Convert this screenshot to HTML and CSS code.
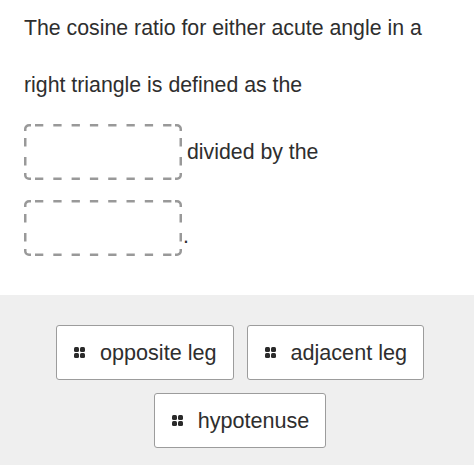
FILE: index.html
```html
<!DOCTYPE html>
<html>
<head>
<meta charset="utf-8">
<link rel="stylesheet" href="styles.css">
</head>
<body>
<div class="question">
  <p class="prompt">The cosine ratio for either acute angle in a<br>right triangle is defined as the</p>
  <div class="blank-row">
    <span class="blank"><svg width="158" height="56" viewBox="0 0 158 56" fill="none" stroke="#999999" stroke-width="2.5">
      <path d="M1.25 7V5A3.75 3.75 0 0 1 5 1.25H7M151 1.25H153A3.75 3.75 0 0 1 156.75 5V7M156.75 49V51A3.75 3.75 0 0 1 153 54.75H151M7 54.75H5A3.75 3.75 0 0 1 1.25 51V49"/>
      <path d="M11 1.25H147.5" stroke-dasharray="8.3 10"/>
      <path d="M11 54.75H147.5" stroke-dasharray="8.3 10"/>
      <path d="M1.25 14V42" stroke-dasharray="8.5 10.5"/>
      <path d="M156.75 14V42" stroke-dasharray="8.5 10.5"/>
    </svg></span>
    <span class="after">divided by the</span>
  </div>
  <div class="blank-row second">
    <span class="blank"><svg width="158" height="56" viewBox="0 0 158 56" fill="none" stroke="#999999" stroke-width="2.5">
      <path d="M1.25 7V5A3.75 3.75 0 0 1 5 1.25H7M151 1.25H153A3.75 3.75 0 0 1 156.75 5V7M156.75 49V51A3.75 3.75 0 0 1 153 54.75H151M7 54.75H5A3.75 3.75 0 0 1 1.25 51V49"/>
      <path d="M11 1.25H147.5" stroke-dasharray="8.3 10"/>
      <path d="M11 54.75H147.5" stroke-dasharray="8.3 10"/>
      <path d="M1.25 14V42" stroke-dasharray="8.5 10.5"/>
      <path d="M156.75 14V42" stroke-dasharray="8.5 10.5"/>
    </svg></span>
    <span class="after period">.</span>
  </div>
</div>
<div class="bank">
  <div class="tiles">
    <div class="tile"><span class="grip"><i></i><i></i><i></i><i></i></span><span>opposite leg</span></div>
    <div class="tile"><span class="grip"><i></i><i></i><i></i><i></i></span><span>adjacent leg</span></div>
    <div class="tile"><span class="grip"><i></i><i></i><i></i><i></i></span><span>hypotenuse</span></div>
  </div>
</div>
</body>
</html>
```
FILE: styles.css
```css
html, body {
  margin: 0;
  padding: 0;
  background: #ffffff;
}
body {
  font-family: "Liberation Sans", Arial, sans-serif;
  color: #2e2e2e;
  font-size: 21.3px;
  width: 474px;
  height: 467px;
  overflow: hidden;
}
.question {
  padding: 0 24px;
  height: 295px;
}
.prompt {
  margin: 0;
  line-height: 57px;
}
.blank-row {
  display: flex;
  align-items: center;
  margin-top: 10px;
}
.blank-row.second {
  margin-top: 20px;
}
.blank {
  display: block;
  width: 158px;
  height: 56px;
}
.blank svg {
  display: block;
}
.after {
  margin-left: 5px;
  line-height: 24px;
}
.after.period {
  margin-left: 1px;
  padding-top: 16px;
}
.bank {
  background: #efefef;
  height: 170px;
  box-sizing: border-box;
  padding: 30px 0 0 6px;
}
.tiles {
  display: flex;
  flex-wrap: wrap;
  justify-content: center;
  gap: 13px;
  width: 372px;
  margin: 0 auto;
}
.tile {
  display: flex;
  align-items: center;
  box-sizing: border-box;
  height: 55px;
  padding: 0 16px 0 17px;
  background: #ffffff;
  border: 1px solid #9c9c9c;
  border-radius: 3px;
  color: #2e2e2e;
  font-size: 21.6px;
}
.grip {
  display: grid;
  grid-template-columns: 5px 5px;
  grid-template-rows: 5px 5px;
  gap: 1px;
  margin-right: 15px;
}
.grip i {
  display: block;
  background: #2a2a2a;
  border-radius: 1.5px;
}
```
